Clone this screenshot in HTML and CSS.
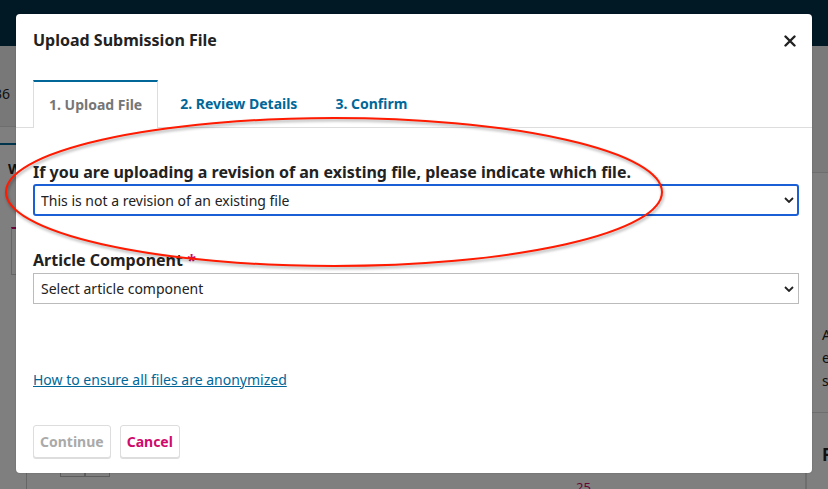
FILE: index.html
```html
<!DOCTYPE html>
<html lang="en">
<head>
    <meta charset="UTF-8">
    <meta name="viewport" content="width=device-width, initial-scale=1.0">
    <title>Upload Submission File</title>
    <link rel="stylesheet" href="styles.css">
</head>
<body>
    <!-- Workflow page behind the modal -->
    <div class="page">
        <header class="topbar"></header>
        <div class="workspace">
            <div class="main-col">
                <div class="sub-head"><span class="sub-id">336</span></div>
                <div class="wf-tabs">
                    <span class="wf-tab">Workflow</span>
                </div>
                <div class="stage-box"></div>
                <div class="grid-area">
                    <div class="pager"><span></span><span></span></div>
                    <span class="count">25</span>
                </div>
            </div>
            <aside class="side-col">
                <div class="side-block"></div>
                <div class="side-text">A<br>e<br>s</div>
                <div class="side-title">F</div>
            </aside>
        </div>
    </div>

    <div class="backdrop"></div>

    <!-- Upload modal -->
    <div class="modal">
        <div class="modal-header">
            <h2>Upload Submission File</h2>
            <button class="close-btn" type="button" aria-label="Close">
                <svg viewBox="0 0 12 12" width="12" height="12">
                    <path d="M1.5 1.5 L10.5 10.5 M10.5 1.5 L1.5 10.5" stroke="#222" stroke-width="2.4" stroke-linecap="round"/>
                </svg>
            </button>
        </div>

        <ul class="tabs">
            <li class="tab active">1. Upload File</li>
            <li class="tab">2. Review Details</li>
            <li class="tab">3. Confirm</li>
        </ul>

        <form class="modal-body">
            <label class="field-label" for="revision">If you are uploading a revision of an existing file, please indicate which file.</label>
            <div class="select-wrap focused">
                <select id="revision">
                    <option>This is not a revision of an existing file</option>
                </select>
                <svg class="chevron" viewBox="0 0 10 6" width="10" height="6"><path d="M1 1 L5 5 L9 1" fill="none" stroke="#222" stroke-width="1.8"/></svg>
            </div>

            <label class="field-label second" for="component">Article Component <span class="req">*</span></label>
            <div class="select-wrap">
                <select id="component">
                    <option>Select article component</option>
                </select>
                <svg class="chevron" viewBox="0 0 10 6" width="10" height="6"><path d="M1 1 L5 5 L9 1" fill="none" stroke="#222" stroke-width="1.8"/></svg>
            </div>

            <a class="help-link" href="#">How to ensure all files are anonymized</a>

            <div class="actions">
                <button type="button" class="btn disabled">Continue</button>
                <button type="button" class="btn cancel">Cancel</button>
            </div>
        </form>
    </div>

    <!-- Red highlight ring drawn over the revision field -->
    <svg class="highlight" width="828" height="489" viewBox="0 0 828 489">
        <ellipse cx="334" cy="192" rx="328" ry="74" fill="none" stroke="#ff1a00" stroke-width="2"/>
    </svg>
</body>
</html>
```

FILE: styles.css
```css
/* Base */
* {
    box-sizing: border-box;
}

body {
    margin: 0;
    font-family: 'Noto Sans', 'Open Sans', sans-serif;
    color: #222;
    background: #fff;
    width: 828px;
    height: 489px;
    overflow: hidden;
    position: relative;
}

/* Page behind the modal */
.page {
    height: 100%;
    display: flex;
    flex-direction: column;
}

.topbar {
    height: 46px;
    background: #03304a;
    flex: none;
}

.workspace {
    flex: 1;
    display: flex;
    background: #fff;
}

.main-col {
    flex: 1;
    border-right: 1px solid #ddd;
}

.sub-head {
    height: 81px;
    background: #f1f1f1;
    border-bottom: 1px solid #ddd;
    padding-top: 38px;
    font-size: 14px;
}

.sub-id {
    margin-left: -14px;
}

.wf-tabs {
    border-top: 2px solid #006798;
    margin-top: 16px;
    height: 68px;
    padding-top: 12px;
}

.wf-tab {
    font-weight: 700;
    font-size: 14px;
    color: #222;
    margin-left: 8px;
}

.stage-box {
    margin: 16px 40px 0 11px;
    height: 48px;
    border-left: 1px solid #ccc;
    border-bottom: 1px solid #ccc;
    border-top: 2px solid #d00a6c;
}

.grid-area {
    margin: 196px 0 0 26px;
    height: 30px;
    border-left: 1px solid #ccc;
    display: flex;
    align-items: flex-start;
}

.pager {
    display: flex;
    margin-left: 33px;
}

.pager span {
    width: 25px;
    height: 6px;
    border: 1px solid #bbb;
    border-top: none;
}

.count {
    margin-left: 466px;
    margin-top: 7px;
    font-size: 13px;
    color: #d00a6c;
}

.side-col {
    width: 22px;
    flex: none;
    overflow: hidden;
    background: #fff;
    border-left: 1px solid #ddd;
}

.side-block {
    height: 127px;
    background: #f4f4f4;
    border-bottom: 1px solid #ddd;
}

.side-text {
    margin-top: 150px;
    padding-left: 15px;
    font-size: 14px;
    line-height: 23px;
    padding-bottom: 20px;
    border-bottom: 1px solid #ddd;
}

.side-title {
    padding: 30px 0 0 15px;
    font-weight: 700;
    font-size: 17px;
}

.backdrop {
    position: absolute;
    inset: 0;
    background: rgba(0, 0, 0, 0.5);
}

/* Modal */
.modal {
    position: absolute;
    left: 16px;
    top: 14px;
    width: 796px;
    height: 459px;
    background: #fff;
    border-radius: 4px;
    box-shadow: 0 0 2px rgba(0, 0, 0, 0.2);
}

.modal-header {
    height: 66px;
    display: flex;
    align-items: center;
    justify-content: space-between;
    padding: 0 13px 14px 17px;
}

.modal-header h2 {
    margin: 0;
    font-size: 16px;
    font-weight: 700;
    line-height: 24px;
}

.close-btn {
    border: none;
    background: none;
    padding: 0;
    width: 14px;
    height: 14px;
    display: flex;
    align-items: center;
    justify-content: center;
    margin-right: 2px;
    margin-top: 2px;
}

.tabs {
    list-style: none;
    margin: 0;
    padding: 0 0 0 17px;
    display: flex;
    height: 48px;
    border-bottom: 1px solid #ddd;
}

.tab {
    font-size: 14px;
    font-weight: 700;
    color: #006798;
    padding: 14px 19px 0 19px;
    line-height: 20px;
}

.tab.active + .tab {
    padding-left: 22px;
}

.tab.active {
    color: #767676;
    border: 1px solid #ddd;
    border-top: 2px solid #006798;
    border-bottom: none;
    background: #fff;
    height: 48px;
    margin-bottom: -1px;
    padding: 13px 15px 0 15px;
}

.modal-body {
    padding: 34px 13px 0 17px;
    display: flex;
    flex-direction: column;
    align-items: flex-start;
}

.field-label {
    font-size: 16px;
    font-weight: 700;
    line-height: 20px;
    margin-bottom: 2px;
}

.field-label.second {
    margin-top: 34px;
    margin-bottom: 3px;
}

.req {
    color: #d00a6c;
}

.select-wrap {
    position: relative;
    width: 100%;
}

.select-wrap select {
    appearance: none;
    width: 100%;
    height: 31px;
    border: 1px solid #bbb;
    border-radius: 0;
    padding: 0 24px 0 7px;
    font-family: inherit;
    font-size: 14px;
    color: #222;
    background: #fff;
}

.select-wrap.focused select {
    height: 32px;
    border: 2px solid #1a5fd6;
    border-radius: 3px;
    padding-left: 6px;
}

.chevron {
    position: absolute;
    right: 5px;
    top: 13px;
}

.help-link {
    margin-top: 66px;
    font-size: 14px;
    line-height: 20px;
    color: #006798;
    text-decoration: underline;
}

.actions {
    margin-top: 35px;
    display: flex;
    gap: 9px;
}

.btn {
    height: 33px;
    padding: 0 6px;
    font-family: inherit;
    font-size: 14px;
    font-weight: 700;
    background: #fff;
    border: 1px solid #ddd;
    border-radius: 3px;
    box-shadow: 0 1px 0 #ddd;
}

.btn.disabled {
    color: #aaa;
}

.btn.cancel {
    color: #d00a6c;
}

/* Annotation ring */
.highlight {
    position: absolute;
    left: 0;
    top: 0;
    pointer-events: none;
    filter: drop-shadow(1px 2px 1.5px rgba(0, 0, 0, 0.35));
}
```
